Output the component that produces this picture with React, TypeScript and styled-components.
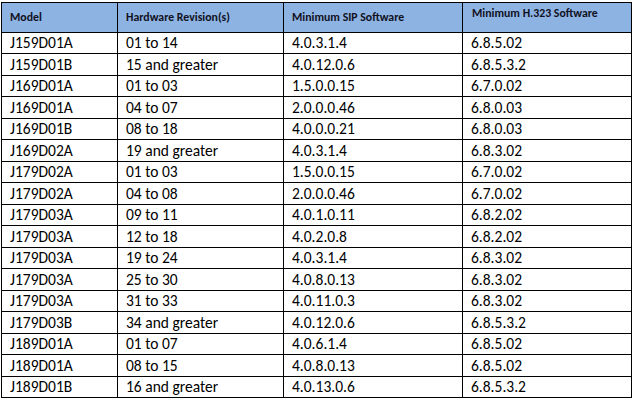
import React from "react";
import styled, { createGlobalStyle } from "styled-components";

const Global = createGlobalStyle`
  html, body { margin: 0; padding: 0; background: #ffffff; }
  body { font-family: Carlito, Lato, "Liberation Sans", sans-serif; color: #000; }
`;

const Page = styled.div`
  padding: 2px 0 0 1px;
`;

const Table = styled.table`
  border-collapse: collapse;
  table-layout: fixed;
  width: 630px;
`;

const Col = styled.col<{ $w: number }>`
  width: ${(p) => p.$w}px;
`;

const HeadCell = styled.th<{ $top?: boolean }>`
  background: #8db3e2;
  border: 1px solid #000;
  height: 25.5px;
  padding: ${(p) => (p.$top ? "3px 8px 0 9px" : "0 8px")};
  vertical-align: ${(p) => (p.$top ? "top" : "middle")};
  text-align: left;
  font-weight: 700;
  font-size: 11.8px;
  color: #111122;
  white-space: nowrap;
  line-height: 1.2;
`;

const Cell = styled.td`
  border: 1px solid #000;
  height: 20.5px;
  padding: 0 8px;
  font-size: 15.5px;
  color: #000;
  white-space: nowrap;
  vertical-align: middle;
  line-height: 1;
`;

const rows: [string, string, string, string][] = [
  ["J159D01A", "01 to 14", "4.0.3.1.4", "6.8.5.02"],
  ["J159D01B", "15 and greater", "4.0.12.0.6", "6.8.5.3.2"],
  ["J169D01A", "01 to 03", "1.5.0.0.15", "6.7.0.02"],
  ["J169D01A", "04 to 07", "2.0.0.0.46", "6.8.0.03"],
  ["J169D01B", "08 to 18", "4.0.0.0.21", "6.8.0.03"],
  ["J169D02A", "19 and greater", "4.0.3.1.4", "6.8.3.02"],
  ["J179D02A", "01 to 03", "1.5.0.0.15", "6.7.0.02"],
  ["J179D02A", "04 to 08", "2.0.0.0.46", "6.7.0.02"],
  ["J179D03A", "09 to 11", "4.0.1.0.11", "6.8.2.02"],
  ["J179D03A", "12 to 18", "4.0.2.0.8", "6.8.2.02"],
  ["J179D03A", "19 to 24", "4.0.3.1.4", "6.8.3.02"],
  ["J179D03A", "25 to 30", "4.0.8.0.13", "6.8.3.02"],
  ["J179D03A", "31 to 33", "4.0.11.0.3", "6.8.3.02"],
  ["J179D03B", "34 and greater", "4.0.12.0.6", "6.8.5.3.2"],
  ["J189D01A", "01 to 07", "4.0.6.1.4", "6.8.5.02"],
  ["J189D01A", "08 to 15", "4.0.8.0.13", "6.8.5.02"],
  ["J189D01B", "16 and greater", "4.0.13.0.6", "6.8.5.3.2"],
];

export default function App() {
  return (
    <Page>
      <Global />
      <Table>
        <colgroup>
          <Col $w={116} />
          <Col $w={166} />
          <Col $w={179} />
          <Col $w={169} />
        </colgroup>
        <thead>
          <tr>
            <HeadCell>Model</HeadCell>
            <HeadCell>Hardware Revision(s)</HeadCell>
            <HeadCell>Minimum SIP Software</HeadCell>
            <HeadCell $top>Minimum H.323 Software</HeadCell>
          </tr>
        </thead>
        <tbody>
          {rows.map((r, i) => (
            <tr key={i}>
              {r.map((c, j) => (
                <Cell key={j}>{c}</Cell>
              ))}
            </tr>
          ))}
        </tbody>
      </Table>
    </Page>
  );
}
